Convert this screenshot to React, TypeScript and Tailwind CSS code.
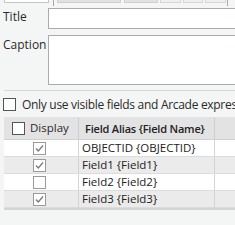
import { ReactNode } from 'react'

function Check({ checked, dim }: { checked?: boolean; dim?: boolean }) {
  return (
    <div
      className={`w-[13px] h-[13px] border bg-white flex items-center justify-center shrink-0 ${
        dim ? 'border-[#9a9a9a]' : 'border-[#555]'
      }`}
    >
      {checked && (
        <svg width="11" height="11" viewBox="0 0 11 11">
          <path d="M2 5.5 L4.3 8 L9 2.5" fill="none" stroke="#7a7a7a" strokeWidth="1.3" />
        </svg>
      )}
    </div>
  )
}

function Row({ checked, label, shaded }: { checked: boolean; label: ReactNode; shaded?: boolean }) {
  return (
    <div className={`flex h-[17px] border-b border-[#dcdcdc] ${shaded ? 'bg-[#ebebeb]' : 'bg-white'}`}>
      <div className="w-[75px] shrink-0 border-r border-[#d4d4d4] flex items-center pl-[29px]">
        <Check checked={checked} dim />
      </div>
      <div className="w-[136px] shrink-0 border-r border-[#d4d4d4] flex items-center pl-[3px] text-[#222] whitespace-nowrap">
        {label}
      </div>
      <div className="flex-1" />
    </div>
  )
}

export default function App() {
  return (
    <div
      className="w-[235px] h-[225px] bg-[#f4f6f5] overflow-hidden text-[11.5px] leading-none text-[#2a2a2a]"
      style={{ fontFamily: '"Open Sans", "Noto Sans", sans-serif' }}
    >
      {/* Tab strip (cut off) */}
      <div className="h-[8px] flex items-start">
        <div className="ml-[4px] w-[45px] h-[3px] bg-white border border-t-0 border-[#c6c6c6]" />
        <div className="ml-[4px] w-px h-[6px] bg-[#a8a8a8]" />
        <div className="ml-[3px] w-[64px] h-[3px] bg-[#e2e2e2] border border-t-0 border-[#cfcfcf]" />
        <div className="ml-[3px] w-[34px] h-[3px] bg-[#e2e2e2] border border-t-0 border-[#cfcfcf]" />
        <div className="ml-[2px] w-[21px] h-[3px] bg-[#f0f0f0] border border-t-0 border-[#d6d6d6]" />
        <div className="ml-[2px] w-[20px] h-[3px] bg-[#f0f0f0] border border-t-0 border-[#d6d6d6]" />
        <div className="ml-[2px] w-[21px] h-[3px] bg-[#f0f0f0] border border-t-0 border-[#d6d6d6]" />
        <div className="ml-[1px] w-px h-[6px] bg-[#a8a8a8]" />
      </div>

      {/* Title */}
      <div className="flex items-start">
        <div className="w-[48px] shrink-0 pl-[3px] pt-[3px] text-[12px]">Title</div>
        <div className="w-[200px] shrink-0 h-[21px] bg-white border border-[#ababab]" />
      </div>

      {/* Caption */}
      <div className="flex items-start mt-[6px]">
        <div className="w-[48px] shrink-0 pl-[3px] pt-[4px] text-[12px]">Caption</div>
        <div className="w-[200px] shrink-0 h-[50px] bg-white border border-[#ababab]" />
      </div>

      <div className="ml-[4px] mt-[5px] h-px bg-[#d6d6d6]" />

      {/* Visible fields option */}
      <div className="flex items-center mt-[7px] pl-[3px] whitespace-nowrap">
        <Check />
        <span className="ml-[6px] text-[12px] tracking-[-0.3px]">Only use visible fields and Arcade expressions</span>
      </div>

      {/* Field table */}
      <div className="ml-[4px] mt-[6px] w-[260px] border-b-2 border-[#d4d4d4]">
        <div className="flex h-[23px] bg-[#e3e3e3] border-b border-[#d0d0d0]">
          <div className="w-[75px] shrink-0 border-r border-[#cfcfcf] flex items-center pl-[8px]">
            <Check />
            <span className="ml-[5px]">Display</span>
          </div>
          <div className="w-[136px] shrink-0 border-r border-[#cfcfcf] flex items-center pl-[6px] font-semibold text-[11px] tracking-[-0.2px] whitespace-nowrap text-[#222]">
            Field Alias {'{'}Field Name{'}'}
          </div>
          <div className="flex-1" />
        </div>
        <Row checked label="OBJECTID {OBJECTID}" />
        <Row checked shaded label="Field1 {Field1}" />
        <Row checked={false} label="Field2 {Field2}" />
        <Row checked shaded label="Field3 {Field3}" />
      </div>
    </div>
  )
}
